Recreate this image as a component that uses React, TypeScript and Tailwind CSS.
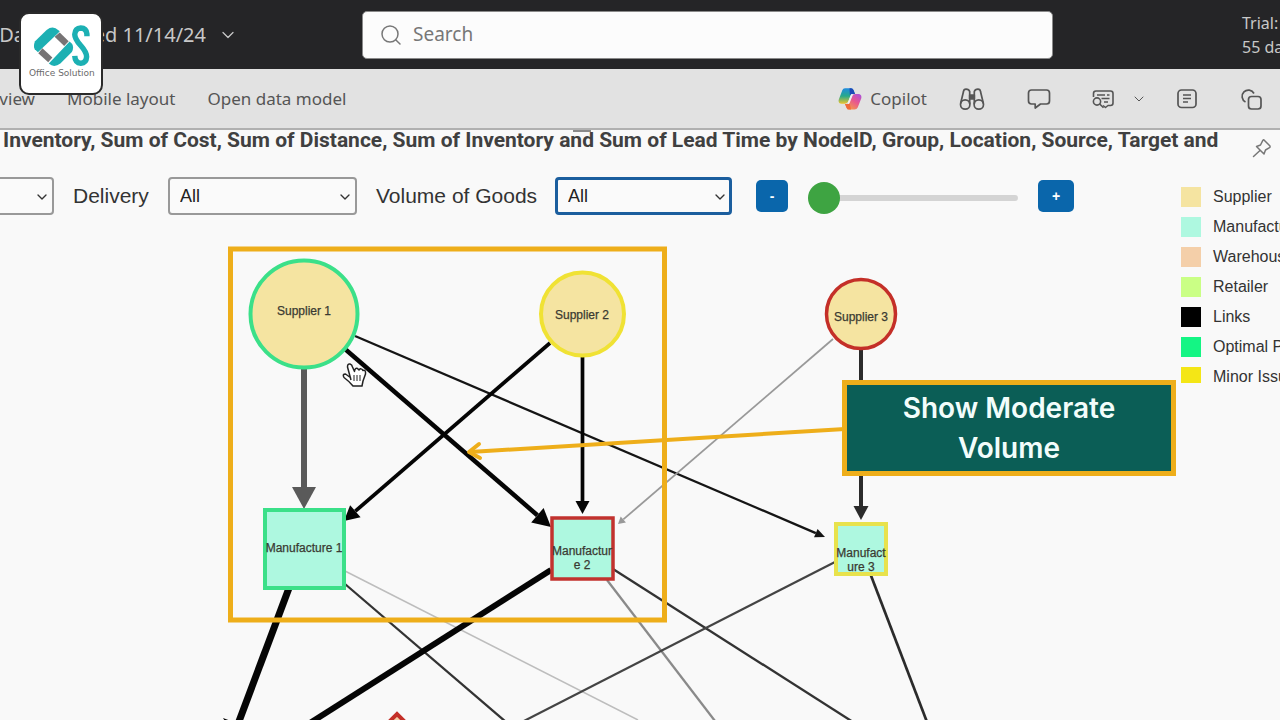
import { ChevronDown, Search } from "lucide-react";

interface EdgeProps {
  from: [number, number];
  to: [number, number];
  width: number;
  color?: string;
  head?: [number, number];
}

const edges: EdgeProps[] = [
  { from: [304, 368], to: [304, 509], width: 6, color: "#5a5a5a", head: [22, 12] },
  { from: [355, 336], to: [825, 537], width: 2.3, color: "#151515", head: [10, 4.5] },
  { from: [345, 349], to: [551, 527], width: 4.5, head: [18, 9.5] },
  { from: [550, 343], to: [344, 521], width: 3.7, head: [15, 8] },
  { from: [582.5, 356], to: [582.5, 514], width: 3.7, head: [13, 7] },
  { from: [833, 339], to: [618, 524], width: 1.8, color: "#999999", head: [7, 4] },
  { from: [861, 348], to: [861, 520], width: 4, color: "#2b2b2b", head: [14, 7.5] },
  { from: [289, 588], to: [238, 724], width: 7 },
  { from: [345, 571], to: [638, 720], width: 1.5, color: "#bdbdbd" },
  { from: [345, 584], to: [506, 722], width: 2.3, color: "#333333" },
  { from: [551, 570], to: [310, 723], width: 6 },
  { from: [613, 569], to: [853, 722], width: 2.3, color: "#333333" },
  { from: [607, 580], to: [715, 721], width: 2.3, color: "#8a8a8a" },
  { from: [835, 562], to: [522, 722], width: 2.2, color: "#444444" },
  { from: [870, 573], to: [927, 722], width: 2.7, color: "#2b2b2b" },
];

const legend = [
  { label: "Supplier", swatch: "bg-[#f5e4a1]" },
  { label: "Manufacture", swatch: "bg-[#aef8e0]" },
  { label: "Warehouse", swatch: "bg-[#f4cfa9]" },
  { label: "Retailer", swatch: "bg-[#caff85]" },
  { label: "Links", swatch: "bg-black" },
  { label: "Optimal Path", swatch: "bg-[#14f584]" },
  { label: "Minor Issue", swatch: "bg-[#f4e616]" },
];

const Edge = ({ from, to, width, color = "#050505", head }: EdgeProps) => {
  const [x1, y1] = from;
  const [x2, y2] = to;
  if (!head) {
    return <line x1={x1} y1={y1} x2={x2} y2={y2} stroke={color} strokeWidth={width} />;
  }
  // arrow base sits `length` back from the tip
  const [length, half] = head;
  const dist = Math.hypot(x2 - x1, y2 - y1);
  const ux = (x2 - x1) / dist;
  const uy = (y2 - y1) / dist;
  const bx = x2 - ux * length;
  const by = y2 - uy * length;
  return (
    <g fill={color}>
      <line x1={x1} y1={y1} x2={bx} y2={by} stroke={color} strokeWidth={width} />
      <polygon
        points={`${x2},${y2} ${bx - uy * half},${by + ux * half} ${bx + uy * half},${by - ux * half}`}
      />
    </g>
  );
};

const Logo = () => (
  <div className="absolute left-[19px] top-3 h-[83px] w-[84px] rounded-[10px] border-2 border-[#2a2a2a] bg-white">
    <svg viewBox="60 41 250 162" className="block h-[53px] w-full">
      <g fill="#1cb0b3">
        <path d="M113 159 L103 149 Q97 138 104 124 L140 89 Q160 74 177 90 L181 94 Z" />
        <path d="M212 125 L220 133 Q226 145 219 158 L183 194 Q163 209 147 194 Z" />
      </g>
      <g fill="#767374">
        <path d="M181 97 L209 124 L195 139 L165 110 Z" />
        <path d="M127 146 L158 175 L145 190 L114 162 Z" />
      </g>
      <path
        d="M266 109 V102 Q264 83 247 83 Q229 84 228 103 Q228 116 246 137 Q265 158 265 173 Q264 192 247 193 Q229 192 228 170"
        fill="none"
        stroke="#1cb0b3"
        strokeWidth="17"
      />
    </svg>
    <p className="whitespace-nowrap pl-2 font-['DejaVu_Sans',sans-serif] text-[9px] leading-3 text-[#6b6b6b]">
      Office Solution
    </p>
  </div>
);

const CopilotIcon = () => (
  <svg viewBox="0 0 24 24" className="size-6">
    <defs>
      <linearGradient id="cop-a" x1="0" y1="0" x2="0" y2="1">
        <stop offset="0" stopColor="#1f8be0" />
        <stop offset="0.5" stopColor="#27a98b" />
        <stop offset="1" stopColor="#f0c52c" />
      </linearGradient>
      <linearGradient id="cop-b" x1="1" y1="0" x2="0.3" y2="1">
        <stop offset="0" stopColor="#a64fe0" />
        <stop offset="0.5" stopColor="#e8578f" />
        <stop offset="1" stopColor="#f59a4b" />
      </linearGradient>
    </defs>
    <path d="M17 7 L15.500 3 Q14.800 1.200 13 1.200 H7 Q5 1.200 4.300 3.200 L0.800 12.500 Q-0.200 16.500 3.500 16.800 H7 Q9.500 16.500 10.400 14.500 L12.400 9 Q13 7 14.800 7 Z" fill="url(#cop-a)" />
    <path d="M7 17 L8.500 20.700 Q9.200 22.600 11 22.600 H16.500 Q18.800 22.600 19.700 20.500 L23.200 11.500 Q24.200 7.400 20.500 7 H17 Q14.500 7.200 13.600 9.300 L11.600 15 Q11 17 9.200 17 Z" fill="url(#cop-b)" />
    <path d="M11.500 1.200 H13 Q14.800 1.200 15.500 3 L17 7 H14.300 Q12.600 7 11.900 8.500 Z" fill="#1c49b8" />
    <path d="M7 17 L8.500 20.700 Q9.200 22.600 11 22.600 H13 L11.500 15.200 Q10.800 17 9.200 17 Z" fill="#f06b3a" />
    <path d="M13.800 8 L10.600 16" stroke="#eeeef4" strokeWidth="2" strokeLinecap="round" />
  </svg>
);

const BinocularsIcon = () => (
  <svg viewBox="0 0 26 24" className="h-6 w-[26px]" fill="none" stroke="currentColor" strokeWidth="1.700" strokeLinejoin="round">
    <circle cx="6.200" cy="17.500" r="4.700" />
    <circle cx="19.800" cy="17.500" r="4.700" />
    <path d="M1.600 16.500 L4.500 4.500 Q4.800 2.200 7 2.200 Q10 2.200 10.700 4.500 V17 M24.400 16.500 L21.500 4.500 Q21.200 2.200 19 2.200 Q16 2.200 15.300 4.500 V17" />
    <path d="M10.700 8 H15.300 V12 H10.700 Z" fill="currentColor" />
  </svg>
);

const CommentIcon = () => (
  <svg viewBox="0 0 24 24" className="size-6" fill="none" stroke="currentColor" strokeWidth="1.700" strokeLinejoin="round">
    <path d="M4.500 3 H19.500 Q22.500 3 22.500 6 V14 Q22.500 17 19.500 17 H13.500 L8.200 21 V17 H4.500 Q1.500 17 1.500 14 V6 Q1.500 3 4.500 3 Z" />
  </svg>
);

const ReviewIcon = () => (
  <svg viewBox="0 0 24 24" className="size-6" fill="none" stroke="currentColor" strokeWidth="1.600" strokeLinejoin="round">
    <path d="M2.500 10 V6.500 Q2.500 4 5 4 H19.500 Q22 4 22 6.500 V16 Q22 18.500 19.500 18.500 H17 L14.500 20.500 L12 18.500" />
    <path d="M6 8 H14 M16 8 H18.500 M10.500 11.500 H18.500 M13 15 H17" />
    <circle cx="6" cy="14.500" r="3.600" />
    <path d="M8.700 17 L12.500 20.800" />
  </svg>
);

const NotesIcon = () => (
  <svg viewBox="0 0 24 24" className="size-6" fill="none" stroke="currentColor" strokeWidth="1.700">
    <rect x="3" y="3" width="18" height="17.500" rx="3.500" />
    <path d="M8 8 H16 M8 11.500 H16 M8 15 H13" />
  </svg>
);

const ShapesIcon = () => (
  <svg viewBox="0 0 24 24" className="size-6" fill="none" stroke="currentColor" strokeWidth="1.700">
    <rect x="9.500" y="9.500" width="12.500" height="12.500" rx="3" />
    <path d="M6.500 15 A6.300 6.300 0 1 1 15 6.500" />
  </svg>
);

const PinIcon = () => (
  <svg viewBox="0 0 20 20" className="size-5" fill="none" stroke="currentColor" strokeWidth="1.500" strokeLinejoin="round" strokeLinecap="round">
    <path d="M12 2 L18 8 Q18.500 9 17.500 9.700 L13.500 12 L12 16 L4.500 8.500 L8.500 7 L10.700 2.700 Q11.200 1.500 12 2 Z M8 12.500 L1.500 18.500" />
  </svg>
);

interface FilterProps {
  id: string;
  label: string;
  labelClass: string;
  boxClass: string;
}

const Filter = ({ id, label, labelClass, boxClass }: FilterProps) => (
  <div className="flex items-center">
    <label htmlFor={id} className={`${labelClass} whitespace-nowrap text-[21px] leading-6 text-[#333333]`}>
      {label}
    </label>
    <div className="relative">
      <select
        id={id}
        className={`${boxClass} h-[38px] appearance-none rounded-[4px] bg-[#fafafa] pl-2.5 text-lg leading-6 text-[#222222] outline-none`}
      >
        <option>All</option>
      </select>
      <ChevronDown className="pointer-events-none absolute right-1 top-3 size-4 text-[#333333]" />
    </div>
  </div>
);

const SvgText = ({ x, y, children }: { x: number; y: number; children: string }) => (
  <text x={x} y={y} textAnchor="middle" fontSize="12" fill="#3a3a32" stroke="#3a3a32" strokeWidth="0.250">
    {children}
  </text>
);

const Diagram = () => (
  <svg viewBox="0 216 1181 504" className="block w-full" role="img" aria-label="Supply chain network">
    {edges.map((edge, i) => (
      <Edge key={i} {...edge} />
    ))}

    {/* SUPPLIERS */}
    <circle cx="304" cy="314" r="53.500" fill="#f5e4a1" stroke="#3be089" strokeWidth="4" />
    <circle cx="582.500" cy="314" r="41.500" fill="#f5e4a1" stroke="#f0e234" strokeWidth="4" />
    <circle cx="861" cy="314" r="34.500" fill="#f5e4a1" stroke="#c42f28" strokeWidth="3.500" />
    <SvgText x={304} y={315}>Supplier 1</SvgText>
    <SvgText x={582} y={319}>Supplier 2</SvgText>
    <SvgText x={861} y={321}>Supplier 3</SvgText>

    {/* MANUFACTURERS */}
    <rect x="265" y="510" width="79" height="78" fill="#aef8e0" stroke="#3be089" strokeWidth="4" />
    <rect x="552" y="518" width="61" height="61" fill="#aef8e0" stroke="#c2322e" strokeWidth="3.500" />
    <rect x="836" y="524" width="50" height="50" fill="#aef8e0" stroke="#e8e24c" strokeWidth="4" />
    <SvgText x={304} y={552}>Manufacture 1</SvgText>
    <SvgText x={582} y={555}>Manufactur</SvgText>
    <SvgText x={582} y={569}>e 2</SvgText>
    <SvgText x={861} y={557}>Manufact</SvgText>
    <SvgText x={861} y={571}>ure 3</SvgText>

    {/* next tier, cut off by the visual's edge */}
    <path d="M385 726 L397 714 L409 726" fill="#f4cfa9" stroke="#c42f28" strokeWidth="4" />
    <path d="M223 718 L244 726 L228 726 Z" fill="#050505" />

    {/* HIGHLIGHT */}
    <g fill="none" stroke="#eeae1a" strokeWidth="5">
      <rect x="230.500" y="249" width="434" height="371" />
      <path d="M845 429 L470 452" strokeWidth="4" />
      <path d="M479 444 L469 452 L480 458" strokeWidth="4" strokeLinecap="round" strokeLinejoin="round" />
    </g>

    {/* hand pointer */}
    <g fill="#ffffff" stroke="#222222" strokeWidth="1.500" strokeLinejoin="round">
      <path d="M351 380 L347.500 367 Q347.500 363.500 350 364 Q352 364.500 352.500 367 L354.500 371.500 Q355 367.500 357.500 368.500 L359 370 Q361 367.500 363 370.500 Q366 369.500 365.500 374 L363 381 L362 386 H353 Q350 382 344 377.500 Q342 374 345.500 374 L351 378" />
      <path d="M354 375 V381 M357 375 V381 M360 375 V381" strokeWidth="1" />
    </g>
  </svg>
);

const App = () => {
  return (
    <div className="relative overflow-hidden bg-[#f9f9f9] font-['Liberation_Sans',Arial,sans-serif]">
      <header className="flex h-[69px] items-center overflow-hidden bg-[#252527] font-['Noto_Sans',sans-serif] text-[#c8c8c8]">
        <div className="flex w-[206px] shrink-0 justify-end overflow-hidden whitespace-nowrap text-xl">
          <span>Data • Saved 11/14/24</span>
        </div>
        <ChevronDown className="ml-3 size-5 shrink-0" strokeWidth={1.5} />
        <label className="ml-[124px] mr-[189px] flex h-12 flex-1 items-center gap-2.5 rounded-[5px] border border-[#8a8a8a] bg-[#fcfcfc] pl-4 text-[#777777]">
          <Search className="size-6" strokeWidth={1.5} />
          <input
            type="text"
            aria-label="Search"
            placeholder="Search"
            className="flex-1 bg-transparent text-[19px] outline-none placeholder:text-[#777777]"
          />
        </label>
        <div className="w-[38px] shrink-0 whitespace-nowrap text-base leading-6">
          <p>Trial:</p>
          <p>55 days left</p>
        </div>
      </header>

      <nav className="flex h-[61px] items-center overflow-hidden border-b-2 border-[#b0b0b0] bg-[#e2e2e2] pt-px font-['Noto_Sans',sans-serif] text-[17px] text-[#555555]">
        <div className="flex w-[35px] shrink-0 justify-end overflow-hidden whitespace-nowrap">
          <button type="button">Web view</button>
        </div>
        <button type="button" className="ml-8 whitespace-nowrap">Mobile layout</button>
        <button type="button" className="ml-8 whitespace-nowrap">Open data model</button>
        <div className="ml-auto flex shrink-0 items-center">
          <button type="button" className="mr-8 flex items-center gap-2">
            <CopilotIcon />
            Copilot
          </button>
          <button type="button" aria-label="Find" className="mr-[42px]"><BinocularsIcon /></button>
          <button type="button" aria-label="Comment" className="mr-10"><CommentIcon /></button>
          <button type="button" aria-label="Review" className="mr-4"><ReviewIcon /></button>
          <button type="button" aria-label="Review options" className="mr-7">
            <ChevronDown className="size-4" strokeWidth={1.5} />
          </button>
          <button type="button" aria-label="Notes" className="mr-10"><NotesIcon /></button>
          <button type="button" aria-label="Shapes" className="mr-[17px]"><ShapesIcon /></button>
        </div>
      </nav>

      <div className="relative flex h-[46px] items-start justify-between pl-[3px] pr-2">
        <h1 className="whitespace-nowrap font-['Roboto',sans-serif] text-[21px] font-bold leading-5 text-[#404040]">
          Inventory, Sum of Cost, Sum of Distance, Sum of Inventory and Sum of Lead Time by NodeID, Group, Location, Source, Target and
        </h1>
        <span className="absolute left-[573px] top-0 h-[2px] w-[18px] bg-[#8a8a8a]" />
        <button type="button" aria-label="Pin visual" className="mt-2 shrink-0 text-[#777777]">
          <PinIcon />
        </button>
      </div>

      <main className="flex items-start">
        <div className="min-w-0 flex-1">
          <div className="flex h-10 items-center">
            <Filter id="shipping" label="" labelClass="" boxClass="w-[54px] rounded-l-none border-2 border-l-0 border-[#999999] text-transparent" />
            <Filter id="delivery" label="Delivery" labelClass="w-[114px] pl-[19px]" boxClass="w-[189px] border-2 border-[#999999]" />
            <Filter id="volume" label="Volume of Goods" labelClass="w-[198px] pl-[19px]" boxClass="w-[177px] border-[3px] border-[#1b5e9e]" />
            <button type="button" className="ml-6 h-8 w-8 shrink-0 rounded-[5px] bg-[#0a66ab] text-sm font-bold text-white">-</button>
            <input
              type="range"
              aria-label="Zoom"
              min={0}
              max={100}
              defaultValue={0}
              className="mx-5 mt-1 h-8 w-[210px] appearance-none bg-transparent [&::-webkit-slider-runnable-track]:h-1.5 [&::-webkit-slider-runnable-track]:rounded-full [&::-webkit-slider-runnable-track]:bg-[#d4d4d4] [&::-webkit-slider-thumb]:-mt-[13px] [&::-webkit-slider-thumb]:size-8 [&::-webkit-slider-thumb]:appearance-none [&::-webkit-slider-thumb]:rounded-full [&::-webkit-slider-thumb]:bg-[#3ea442]"
            />
            <button type="button" className="h-8 w-9 shrink-0 rounded-[5px] bg-[#0a66ab] text-sm font-bold text-white">+</button>
          </div>

          <div className="relative">
            <Diagram />
            <div className="absolute left-[842px] top-[164px] flex h-24 w-[334px] items-center justify-center border-[5px] border-[#eeae1a] bg-[#0b5e56] px-10 text-center font-['Inter',sans-serif] text-[28px] font-semibold leading-10 text-[#f2fdfb]">
              Show Moderate Volume
            </div>
          </div>
        </div>

        <ul className="mt-[11px] flex h-[196px] w-[99px] shrink-0 flex-col gap-2.5 overflow-hidden">
          {legend.map(({ label, swatch }) => (
            <li key={label} className="flex h-5 shrink-0 items-center gap-3 whitespace-nowrap text-base leading-5 text-[#333333]">
              <span className={`${swatch} size-5 shrink-0`} />
              {label}
            </li>
          ))}
        </ul>
      </main>

      <Logo />
    </div>
  );
};

export default App;
